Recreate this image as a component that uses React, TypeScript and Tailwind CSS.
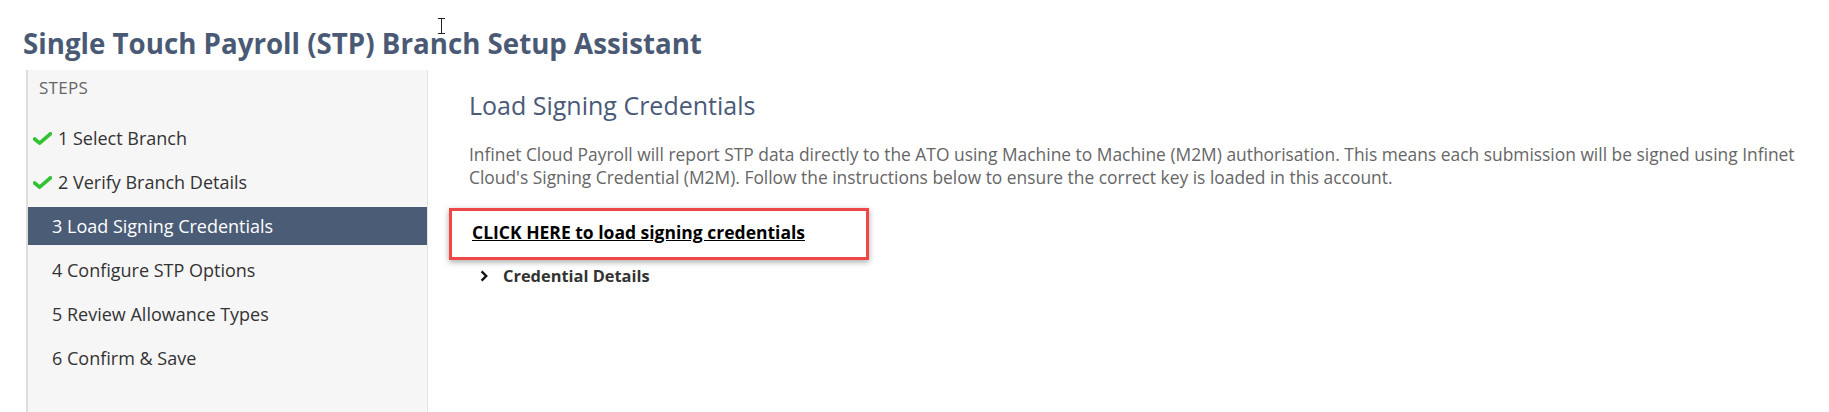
import { useState } from 'react';

type Step = {
  id: number;
  label: string;
  done: boolean;
};

const steps: Step[] = [
  { id: 1, label: 'Select Branch', done: true },
  { id: 2, label: 'Verify Branch Details', done: true },
  { id: 3, label: 'Load Signing Credentials', done: false },
  { id: 4, label: 'Configure STP Options', done: false },
  { id: 5, label: 'Review Allowance Types', done: false },
  { id: 6, label: 'Confirm & Save', done: false },
];

// Green tick shown next to finished steps
const CheckIcon = () => (
  <svg width="19" height="13" viewBox="0 0 19 13" className="shrink-0">
    <path d="M1.6 7 L6.6 11.2 L17.4 1.8" fill="none" stroke="#33c233" strokeWidth="3.6" strokeLinejoin="round" strokeLinecap="round" />
  </svg>
);

const ChevronRight = ({ open }: { open: boolean }) => (
  <svg
    width="8"
    height="12"
    viewBox="0 0 8 12"
    className={open ? 'shrink-0 rotate-90' : 'shrink-0'}
  >
    <path d="M1.6 1.4 L6.2 6 L1.6 10.6" fill="none" stroke="#111" strokeWidth="2.4" />
  </svg>
);

const App = () => {
  const [currentStep] = useState(3);
  const [detailsOpen, setDetailsOpen] = useState(false);

  return (
    <div className="relative h-[412px] w-full overflow-hidden bg-white font-['Open_Sans',sans-serif] flex flex-col">
      {/* text cursor resting over the header */}
      <svg width="9" height="16" viewBox="0 0 9 16" className="absolute left-[437px] top-[18px]">
        <path d="M1 0.5 H8 M4.5 0.5 V15.5 M1 15.5 H8" stroke="#222" strokeWidth="1" fill="none" />
      </svg>

      <h1 className="ml-[23px] mt-[24px] text-[27.7px] leading-[38px] font-bold text-[#4a5a75]">
        Single Touch Payroll (STP) Branch Setup Assistant
      </h1>

      <div className="mt-[8px] flex flex-1">
        {/* Steps sidebar */}
        <aside className="ml-[26px] w-[402px] shrink-0 bg-[#f6f6f6] border-l-2 border-r border-l-[#dedede] border-r-[#e4e4e4]">
          <div className="pl-[11px] pt-[6px] text-[17px] leading-[24px] tracking-[0.3px] text-[#666]">STEPS</div>
          <ul className="mt-[19px] flex flex-col gap-[6px]">
            {steps.map((step) => {
              const active = step.id === currentStep;
              return (
                <li
                  key={step.id}
                  className={
                    'flex h-[38px] items-center text-[18px] ' +
                    (active ? 'bg-[#4b5c77] text-white' : 'text-[#333]') +
                    (step.done ? ' pl-[5px] gap-[6px]' : ' pl-[24px]')
                  }
                >
                  {step.done && <CheckIcon />}
                  <span>
                    {step.id} {step.label}
                  </span>
                </li>
              );
            })}
          </ul>
        </aside>

        {/* Step content */}
        <main className="flex-1 pl-[41px] pr-[12px] pt-[19px]">
          <h2 className="text-[25px] leading-[32px] text-[#4a5a78]">Load Signing Credentials</h2>
          <p className="mt-[22px] text-[17.4px] leading-[23px] text-[#666]">
            Infinet Cloud Payroll will report STP data directly to the ATO using Machine to Machine (M2M) authorisation. This
            means each submission will be signed using Infinet Cloud's Signing Credential (M2M). Follow the instructions below
            to ensure the correct key is loaded in this account.
          </p>

          <div className="-ml-[20px] mt-[19px] w-[420px] border-[3px] border-[#ef4646] bg-white pl-[20px] pt-[9px] pb-[12px] shadow-[0_2px_6px_rgba(0,0,0,0.35)]">
            <a href="#" className="text-[17.5px] leading-[24px] font-bold text-black underline">
              CLICK HERE to load signing credentials
            </a>
          </div>

          <button
            type="button"
            onClick={() => setDetailsOpen(!detailsOpen)}
            className="mt-[4px] ml-[11px] flex items-center gap-[15px] text-[16.4px] leading-[24px] font-bold text-[#333]"
          >
            <ChevronRight open={detailsOpen} />
            Credential Details
          </button>
        </main>
      </div>
    </div>
  );
};

export default App;
